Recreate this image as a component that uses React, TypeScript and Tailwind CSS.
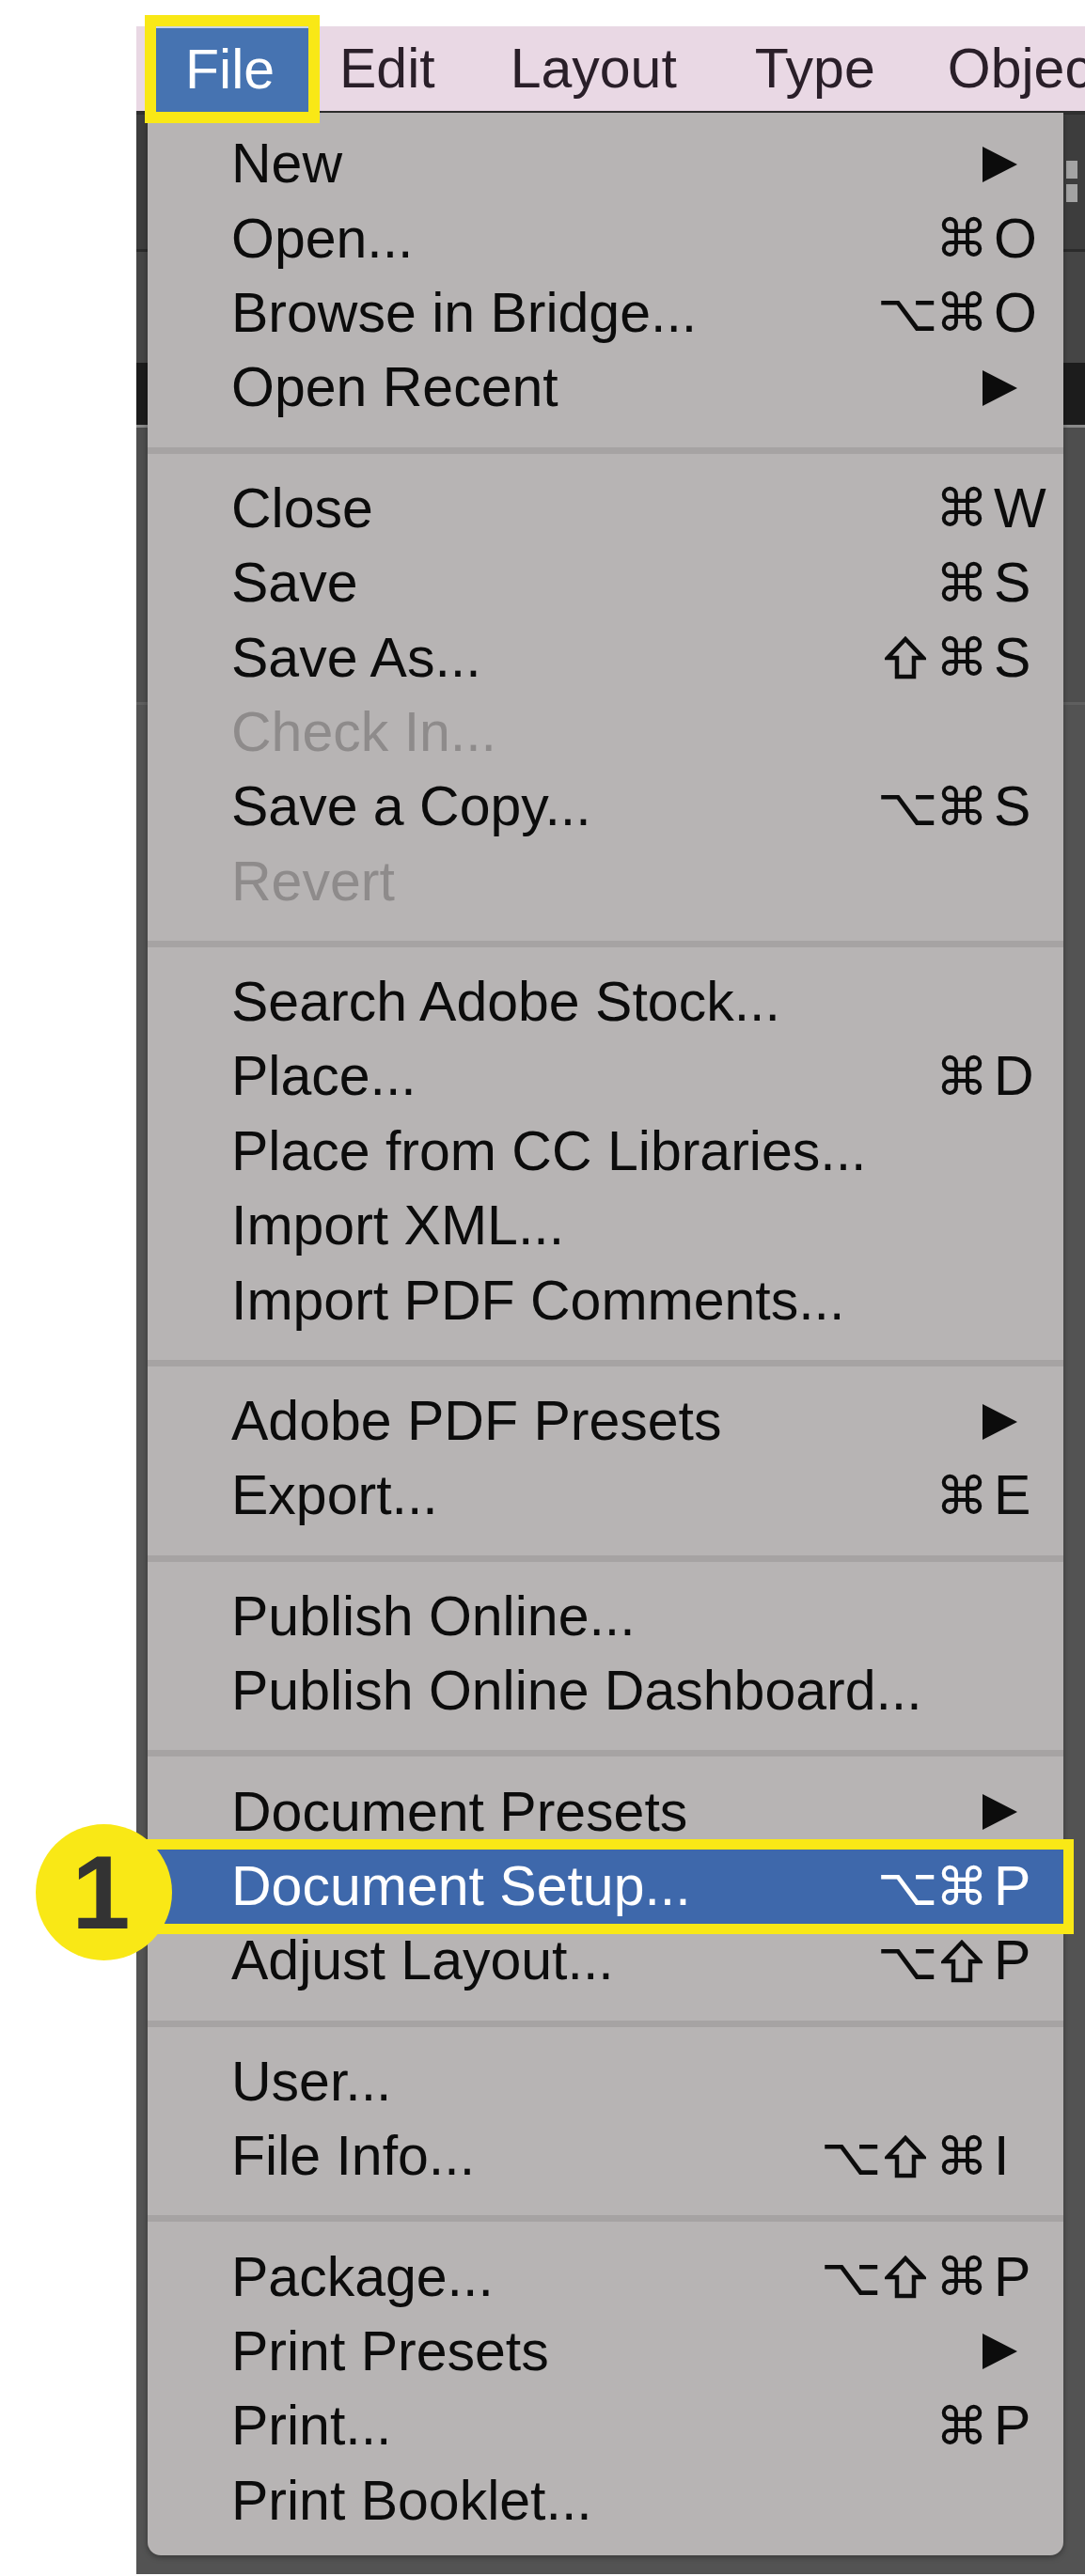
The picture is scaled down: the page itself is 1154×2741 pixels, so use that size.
import React from "react";

// ─── Types ────────────────────────────────────────────────────────────────────

interface MenuItem {
  label: string;
  mods?: string[];
  keyChar?: string;
  sub?: boolean;
  disabled?: boolean;
  active?: boolean;
}

const GROUPS: MenuItem[][] = [
  [
    { label: "New", sub: true },
    { label: "Open...", mods: ["⌘"], keyChar: "O" },
    { label: "Browse in Bridge...", mods: ["⌥", "⌘"], keyChar: "O" },
    { label: "Open Recent", sub: true },
  ],
  [
    { label: "Close", mods: ["⌘"], keyChar: "W" },
    { label: "Save", mods: ["⌘"], keyChar: "S" },
    { label: "Save As...", mods: ["⇧", "⌘"], keyChar: "S" },
    { label: "Check In...", disabled: true },
    { label: "Save a Copy...", mods: ["⌥", "⌘"], keyChar: "S" },
    { label: "Revert", disabled: true },
  ],
  [
    { label: "Search Adobe Stock..." },
    { label: "Place...", mods: ["⌘"], keyChar: "D" },
    { label: "Place from CC Libraries..." },
    { label: "Import XML..." },
    { label: "Import PDF Comments..." },
  ],
  [
    { label: "Adobe PDF Presets", sub: true },
    { label: "Export...", mods: ["⌘"], keyChar: "E" },
  ],
  [{ label: "Publish Online..." }, { label: "Publish Online Dashboard..." }],
  [
    { label: "Document Presets", sub: true },
    { label: "Document Setup...", mods: ["⌥", "⌘"], keyChar: "P", active: true },
    { label: "Adjust Layout...", mods: ["⌥", "⇧"], keyChar: "P" },
  ],
  [{ label: "User..." }, { label: "File Info...", mods: ["⌥", "⇧", "⌘"], keyChar: "I" }],
  [
    { label: "Package...", mods: ["⌥", "⇧", "⌘"], keyChar: "P" },
    { label: "Print Presets", sub: true },
    { label: "Print...", mods: ["⌘"], keyChar: "P" },
    { label: "Print Booklet..." },
  ],
];

const FONT = { fontFamily: '"Liberation Sans", Arial, sans-serif' };
const SYMBOL_FONT = { fontFamily: '"DejaVu Sans", "Liberation Sans", sans-serif' };

// Outline shift arrow (the DejaVu glyph is too narrow)
function ShiftGlyph({ color }: { color: string }) {
  return (
    <svg width="44" height="46" viewBox="0 0 44 46" className="mx-auto">
      <path
        d="M22 3 L41 23 L31 23 L31 43 L13 43 L13 23 L3 23 Z"
        fill="none"
        stroke={color}
        strokeWidth="4.5"
        strokeLinejoin="miter"
      />
    </svg>
  );
}

// ─── Menu row ─────────────────────────────────────────────────────────────────

function Row({ item }: { item: MenuItem }) {
  const color = item.active ? "text-white" : item.disabled ? "text-[#8e8b8b]" : "text-[#0c0c0c]";
  return (
    <div
      className={[
        "h-[79.4px] flex items-center pl-[89px] pr-[19px] text-[59px] leading-none",
        color,
        item.active ? "bg-[#3e68ab] relative z-10 outline-[11px] outline-solid outline-[#f9e816]" : "",
      ].join(" ")}
    >
      <span className="flex-1 whitespace-nowrap">{item.label}</span>

      {item.sub && (
        <svg width="37" height="38" viewBox="0 0 37 38" className="mr-[30px] shrink-0">
          <polygon points="0,0 37,19 0,38" fill="#0c0c0c" />
        </svg>
      )}

      {item.keyChar && (
        <div className="flex items-center shrink-0">
          {item.mods?.map((m, i) =>
            m === "⇧" ? (
              <span key={i} className="w-[60px] flex justify-center">
                <ShiftGlyph color={item.active ? "#ffffff" : "#0c0c0c"} />
              </span>
            ) : (
              <span key={i} className="w-[60px] text-center text-[56px]" style={SYMBOL_FONT}>
                {m}
              </span>
            )
          )}
          <span className="w-[55px] ml-[4px] text-left">{item.keyChar}</span>
        </div>
      )}
    </div>
  );
}

function Separator() {
  return (
    <div className="pt-[23px] pb-[19px]">
      <div className="h-[7px] bg-[#a6a3a3]" />
    </div>
  );
}

// ─── Page ─────────────────────────────────────────────────────────────────────

export default function App() {
  return (
    <div className="relative w-[1154px] h-[2741px] bg-white overflow-hidden" style={FONT}>
      <div className="pt-[28px] pl-[145px] flex flex-col">
        {/* Menu bar */}
        <div className="relative z-20 h-[90px] bg-[#e9d8e4] flex items-center text-[59px] text-[#2a1f29] whitespace-nowrap overflow-visible">
          <div className="shrink-0 ml-[21px] w-[162px] h-[91px] bg-[#4673b1] text-white flex items-center pl-[31px] outline-[12px] outline-solid outline-[#f9e816] border-t-2 border-white/70">
            File
          </div>
          <span className="shrink-0 ml-[33px]">Edit</span>
          <span className="shrink-0 ml-[80px]">Layout</span>
          <span className="shrink-0 ml-[83px]">Type</span>
          <span className="shrink-0 ml-[77px]">Object</span>
        </div>

        {/* App chrome behind the menu */}
        <div className="h-[4px] bg-[#2f2f2f]" />
        <div className="h-[143px] bg-[#3d3d3d] flex justify-end pr-[8px] pt-[49px]">
          <div className="flex flex-col gap-[6px]">
            <div className="w-[12px] h-[19px] bg-[#a3a3a3]" />
            <div className="w-[12px] h-[19px] bg-[#a3a3a3]" />
          </div>
        </div>
        <div className="h-[3px] bg-[#2b2b2b]" />
        <div className="h-[118px] bg-[#454545]" />
        <div className="h-[66px] bg-[#1c1c1c]" />
        <div className="h-[3px] bg-[#8a8a8a]" />
        <div className="h-[292px] bg-[#4e4e4e]" />
        <div className="h-[3px] bg-[#5f5f5f]" />
        <div className="h-[1989px] bg-[#535353]" />
      </div>

      {/* Dropdown menu */}
      <div className="absolute left-[157px] top-[120px] w-[974px] bg-[#b7b4b4] rounded-b-[14px] pt-[15px] pb-[18px] shadow-[0_2px_6px_rgba(0,0,0,0.35)]">
        {GROUPS.map((group, gi) => (
          <div key={gi}>
            {gi > 0 && <Separator />}
            {group.map((item) => (
              <Row key={item.label} item={item} />
            ))}
          </div>
        ))}
      </div>

      {/* Step marker */}
      <div className="absolute left-[38px] top-[1941px] w-[145px] h-[145px] rounded-full bg-[#f9e816] z-30 flex items-center justify-center">
        <span className="text-[112px] font-bold text-[#333333] leading-none -ml-[6px]">1</span>
      </div>
    </div>
  );
}
